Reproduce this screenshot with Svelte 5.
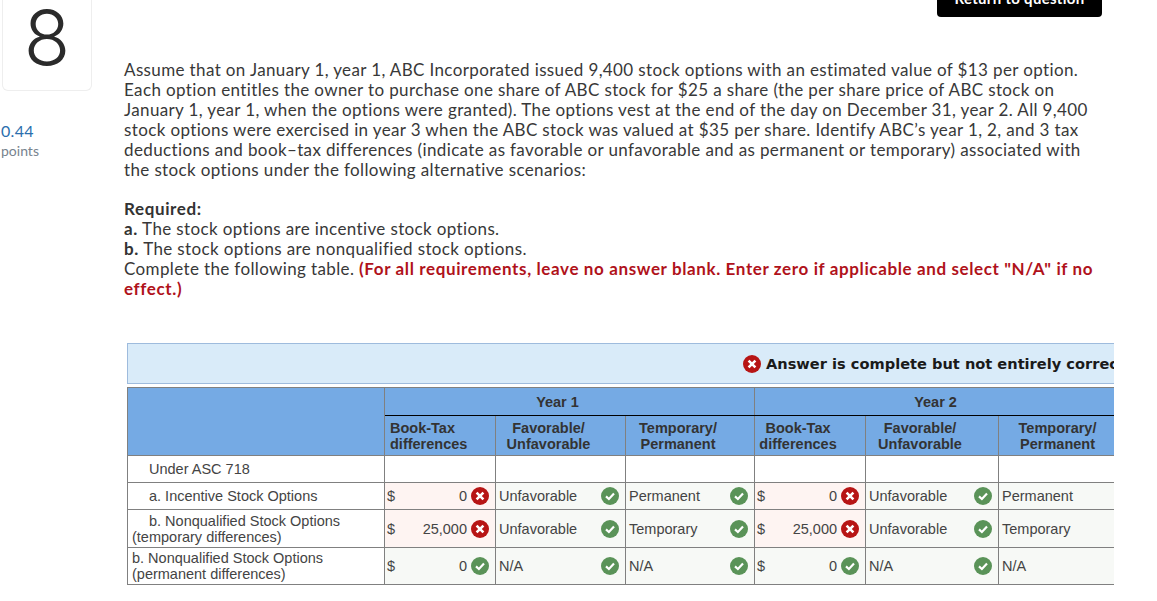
<script>
  const years = ["Year 1", "Year 2"];
  const rows = [
    { label: "a. Incentive Stock Options", kind: "indent", cls: "r-a", cells: [["0", false, "Unfavorable", "Permanent"], ["0", false, "Unfavorable", "Permanent"]] },
    { label: "b. Nonqualified Stock Options", sub: "(temporary differences)", kind: "indent", cls: "r-b", cells: [["25,000", false, "Unfavorable", "Temporary"], ["25,000", false, "Unfavorable", "Temporary"]] },
    { label: "b. Nonqualified Stock Options", sub: "(permanent differences)", kind: "flat", cls: "r-c", cells: [["0", true, "N/A", "N/A"], ["0", true, "N/A", "N/A"]] }
  ];
</script>

{#snippet mark(ok)}
  <svg class="mark" viewBox="0 0 18 18" width="18" height="18">
    <circle cx="9" cy="9" r="9" fill={ok ? "#5a9358" : "#b71515"} />
    {#if ok}
      <path d="M5 9.4 L7.9 12 L13 6.6" fill="none" stroke="#fff" stroke-width="2.2" />
    {:else}
      <path d="M5.6 5.6 L12.4 12.4 M12.4 5.6 L5.6 12.4" fill="none" stroke="#fff" stroke-width="2.6" />
    {/if}
  </svg>
{/snippet}

<div class="page">
  <aside class="side">
    <div class="num">8</div>
    <div class="score">0.44</div>
    <div class="pts">points</div>
  </aside>

  <main class="content">
    <div class="top"><button class="back">Return to question</button></div>

    <p class="q">
      Assume that on January 1, year 1, ABC Incorporated issued 9,400 stock options with an estimated value of $13 per option.<br />
      Each option entitles the owner to purchase one share of ABC stock for $25 a share (the per share price of ABC stock on<br />
      January 1, year 1, when the options were granted). The options vest at the end of the day on December 31, year 2. All 9,400<br />
      stock options were exercised in year 3 when the ABC stock was valued at $35 per share. Identify ABC’s year 1, 2, and 3 tax<br />
      deductions and book–tax differences (indicate as favorable or unfavorable and as permanent or temporary) associated with<br />
      the stock options under the following alternative scenarios:
    </p>

    <p class="q req">
      <strong>Required:</strong><br />
      <strong>a.</strong> The stock options are incentive stock options.<br />
      <strong>b.</strong> The stock options are nonqualified stock options.<br />
      Complete the following table. <strong class="red">(For all requirements, leave no answer blank. Enter zero if applicable and select "N/A" if no<br />effect.)</strong>
    </p>

    <div class="clip">
      <div class="banner">
        <div class="msg">{@render mark(false)}<span>Answer is complete but not entirely correct.</span></div>
      </div>

      <table>
        <colgroup>
          <col style="width:257px" />
          <col style="width:111px" /><col style="width:130px" /><col style="width:129px" />
          <col style="width:111px" /><col style="width:133px" /><col style="width:142px" />
        </colgroup>
        <thead>
          <tr class="yr">
            <th class="corner" rowspan="2"></th>
            {#each years as y}<th colspan="3">{y}</th>{/each}
          </tr>
          <tr class="sub">
            {#each years as y, i}
              <th class:first={i === 0}>Book-Tax<br />differences</th>
              <th>Favorable/<br />Unfavorable</th>
              <th>Temporary/<br />Permanent</th>
            {/each}
          </tr>
        </thead>
        <tbody>
          <tr class="blank">
            <td class="lbl"><span class="ind">Under ASC 718</span></td>
            {#each Array(6) as _}<td></td>{/each}
          </tr>
          {#each rows as r}
            <tr class={r.cls}>
              <td class="lbl">
                {#if r.kind === "indent"}<span class="ind">{r.label}</span>{:else}{r.label}{/if}
                {#if r.sub}<br />{r.sub}{/if}
              </td>
              {#each r.cells as c}
                <td class={c[1] ? "good" : "bad"}>
                  <div class="amt"><span>$</span><span class="val">{c[0]}</span>{@render mark(c[1])}</div>
                </td>
                <td class="good"><div class="pick"><span>{c[2]}</span>{@render mark(true)}</div></td>
                <td class="good"><div class="pick"><span>{c[3]}</span>{@render mark(true)}</div></td>
              {/each}
            </tr>
          {/each}
        </tbody>
      </table>
    </div>
  </main>
</div>

<style>
  :global(body) {
    background: #fff;
    overflow: hidden;
  }

  .page {
    display: flex;
    height: 601px;
    overflow: hidden;
    font-family: Lato, "Liberation Sans", sans-serif;
    color: #333;
  }

  .side {
    width: 124px;
    flex: none;
  }

  .num {
    box-sizing: border-box;
    width: 90px;
    height: 92px;
    margin: -1px 0 0 2px;
    border: 1px solid #eee;
    border-top: none;
    border-radius: 0 0 6px 6px;
    font-family: Inter, sans-serif;
    font-size: 76px;
    font-weight: 350;
    line-height: 76px;
    text-align: center;
    color: #2b2b2b;
  }

  .score {
    margin: 30px 0 0 1px;
    font-size: 16px;
    line-height: 20px;
    letter-spacing: 0.3px;
    color: #2b6fae;
  }

  .pts {
    margin-left: 1px;
    font-size: 14px;
    line-height: 20px;
    color: #77838e;
  }

  .content {
    flex: 1;
    min-width: 0;
  }

  .top {
    display: flex;
    justify-content: flex-end;
    height: 17px;
    margin-right: 55px;
  }

  .back {
    width: 165px;
    height: 38px;
    margin-top: -21px;
    padding: 0;
    border: none;
    border-radius: 0 0 4px 4px;
    background: #000;
    color: #fff;
    font: 700 15px Lato, sans-serif;
    letter-spacing: 0.3px;
  }

  .q {
    margin: 43px 0 0;
    font-size: 17px;
    line-height: 20px;
    letter-spacing: 0.37px;
    color: #383838;
    white-space: nowrap;
  }

  .q strong {
    letter-spacing: 0.62px;
    color: #333;
  }

  .req {
    margin-top: 19px;
  }

  .q .red {
    color: #b0121b;
  }

  .clip {
    width: 987px;
    margin: 44px 0 0 3px;
    overflow: hidden;
  }

  .banner {
    box-sizing: border-box;
    width: 987px;
    height: 41px;
    border: 1px solid #9ebbdd;
    border-right: none;
    background: #d9ebf9;
    overflow: hidden;
  }

  .msg {
    display: flex;
    align-items: center;
    gap: 5px;
    height: 39px;
    padding-left: 615px;
    font: 700 14.6px "DejaVu Sans", sans-serif;
    color: #1a1a1a;
    white-space: nowrap;
  }

  table {
    table-layout: fixed;
    width: 1013px;
    margin-top: 3px;
    border-collapse: collapse;
    font: 14.5px "Liberation Sans", sans-serif;
    color: #444;
  }

  th,
  td {
    padding: 0;
    border: 1px solid #808080;
  }

  th {
    padding-right: 24px;
    background: #75aae4;
    color: #333;
    font-weight: 700;
    line-height: 16px;
    text-align: center;
  }

  .sub .first {
    padding: 0 0 0 5px;
    text-align: left;
  }

  .yr th {
    height: 27px;
    border-bottom-color: #000;
  }

  .yr .corner {
    border-bottom-color: #808080;
  }

  .sub th {
    height: 39px;
    border-top-color: #000;
  }

  .blank td {
    height: 26px;
  }

  .r-a td {
    height: 26px;
  }

  .r-b td {
    height: 37px;
  }

  .r-c td {
    height: 36px;
  }

  .lbl {
    padding-left: 4px;
    line-height: 16px;
    background: #fff;
  }

  .ind {
    padding-left: 17px;
  }

  .bad {
    background: #fef4f2;
  }

  .good {
    background: #f7f9f6;
  }

  .amt,
  .pick {
    display: flex;
    align-items: center;
  }

  .amt {
    padding: 0 6px 0 2px;
  }

  .val {
    margin: 0 4px 0 auto;
  }

  .pick {
    justify-content: space-between;
    padding: 0 6px 0 3px;
  }

  .mark {
    flex: none;
    display: block;
  }
</style>
